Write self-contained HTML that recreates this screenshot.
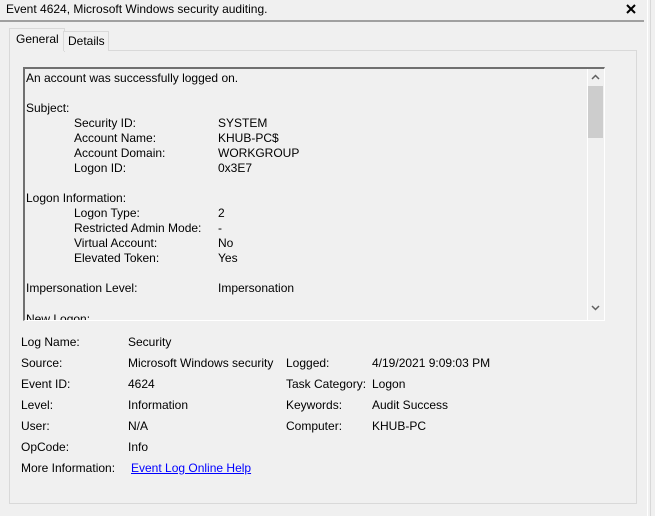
<!DOCTYPE html>
<html><head><style>
body{margin:0;width:655px;height:516px;background:#f0f0f0;font-family:"Liberation Sans",sans-serif;font-size:12px;color:#000;position:relative;overflow:hidden}
.a{position:absolute;white-space:nowrap;line-height:15px}
</style></head><body>
<div class="a" style="left:6px;top:2px">Event 4624, Microsoft Windows security auditing.</div>
<svg class="a" style="left:626px;top:4px" width="10" height="10"><path d="M1 1L9 9M9 1L1 9" stroke="#000" stroke-width="2"/></svg>
<div class="a" style="left:0;top:20px;width:644px;height:2px;background:#a0a0a0"></div>
<div class="a" style="left:647px;top:0;width:1px;height:516px;background:#fff"></div>
<div class="a" style="left:650px;top:0;width:1px;height:516px;background:#d8d8d8"></div>
<div class="a" style="left:9px;top:50px;width:626px;height:452px;border:1px solid #d9d9d9;background:#f0f0f0"></div>
<div class="a" style="left:9px;top:28px;width:54px;height:23px;border:1px solid #d9d9d9;border-bottom:none;background:#f0f0f0"></div>
<div class="a" style="left:16px;top:32px">General</div>
<div class="a" style="left:63px;top:31px;width:44px;height:19px;border:1px solid #d9d9d9;border-bottom:none;background:#f0f0f0"></div>
<div class="a" style="left:68px;top:34px">Details</div>
<div class="a" style="left:23px;top:67px;width:579px;height:251px;border-top:2px solid #707070;border-left:2px solid #707070;border-right:1px solid #fff;border-bottom:1px solid #fff;overflow:hidden">
<div class="a" style="left:1px;top:2px">An account was successfully logged on.</div>
<div class="a" style="left:1px;top:32px">Subject:</div>
<div class="a" style="left:49px;top:47px">Security ID:</div><div class="a" style="left:193px;top:47px">SYSTEM</div>
<div class="a" style="left:49px;top:62px">Account Name:</div><div class="a" style="left:193px;top:62px">KHUB-PC$</div>
<div class="a" style="left:49px;top:77px">Account Domain:</div><div class="a" style="left:193px;top:77px">WORKGROUP</div>
<div class="a" style="left:49px;top:92px">Logon ID:</div><div class="a" style="left:193px;top:92px">0x3E7</div>
<div class="a" style="left:1px;top:122px">Logon Information:</div>
<div class="a" style="left:49px;top:137px">Logon Type:</div><div class="a" style="left:193px;top:137px">2</div>
<div class="a" style="left:49px;top:152px">Restricted Admin Mode:</div><div class="a" style="left:193px;top:152px">-</div>
<div class="a" style="left:49px;top:167px">Virtual Account:</div><div class="a" style="left:193px;top:167px">No</div>
<div class="a" style="left:49px;top:182px">Elevated Token:</div><div class="a" style="left:193px;top:182px">Yes</div>
<div class="a" style="left:1px;top:212px">Impersonation Level:</div><div class="a" style="left:193px;top:212px">Impersonation</div>
<div class="a" style="left:1px;top:243px">New Logon:</div>
<div class="a" style="left:562px;top:0;width:16px;height:251px;background:#f0f0f0;border-left:1px solid #fff"></div>
<div class="a" style="left:563px;top:17px;width:15px;height:52px;background:#cdcdcd"></div>
<svg class="a" style="left:566px;top:5px" width="9" height="6"><path d="M1 5L4.5 1.5L8 5" stroke="#606060" stroke-width="1.5" fill="none"/></svg>
<svg class="a" style="left:566px;top:236px" width="9" height="6"><path d="M1 1L4.5 4.5L8 1" stroke="#606060" stroke-width="1.5" fill="none"/></svg>
</div>
<div class="a" style="left:21px;top:332px;line-height:21px">Log Name:<br>Source:<br>Event ID:<br>Level:<br>User:<br>OpCode:<br>More Information:</div>
<div class="a" style="left:128px;top:332px;line-height:21px">Security<br>Microsoft Windows security<br>4624<br>Information<br>N/A<br>Info</div>
<div class="a" style="left:131px;top:461px;line-height:15px;color:#0000ff;text-decoration:underline">Event Log Online Help</div>
<div class="a" style="left:286px;top:353px;line-height:21px">Logged:<br>Task Category:<br>Keywords:<br>Computer:</div>
<div class="a" style="left:372px;top:353px;line-height:21px">4/19/2021 9:09:03 PM<br>Logon<br>Audit Success<br>KHUB-PC</div>
</body></html>
